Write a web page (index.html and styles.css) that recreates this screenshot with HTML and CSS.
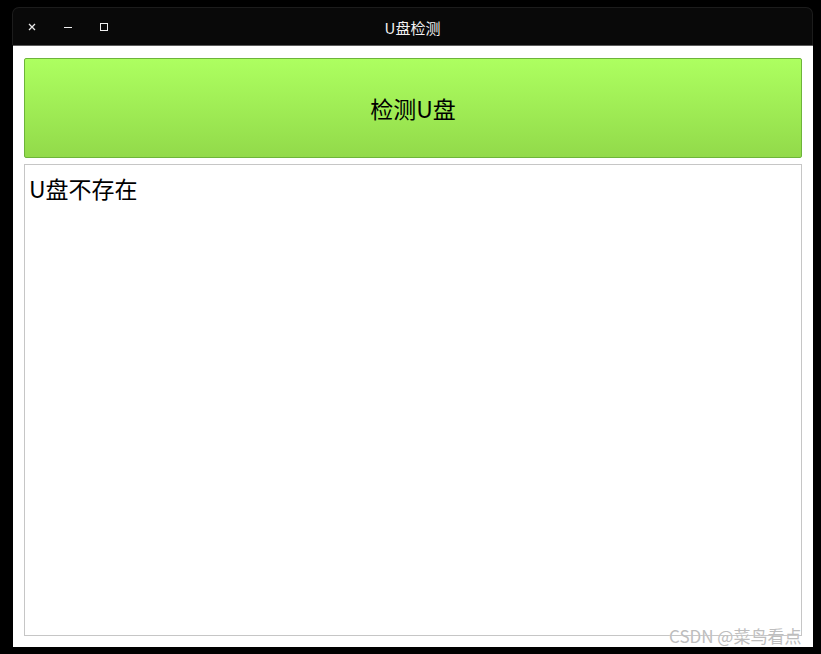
FILE: index.html
```html
<!DOCTYPE html>
<html>
<head>
<meta charset="utf-8">
<link rel="stylesheet" href="styles.css">
</head>
<body>
<div class="window">
  <div class="titlebar">
    <div class="controls">
      <span class="ctl close"><svg width="8" height="8" viewBox="0 0 8 8"><path d="M1 1L7 7M7 1L1 7" stroke="#e8e8e8" stroke-width="1.3"/></svg></span>
      <span class="ctl min"><svg width="10" height="8" viewBox="0 0 10 8"><path d="M1 4.5H9" stroke="#f0f0f0" stroke-width="1"/></svg></span>
      <span class="ctl max"><svg width="10" height="10" viewBox="0 0 10 10"><rect x="1.5" y="1.5" width="7" height="7" fill="none" stroke="#f0f0f0" stroke-width="1"/></svg></span>
    </div>
    <div class="title">U盘检测</div>
  </div>
  <div class="content">
    <button class="detect">检测U盘</button>
    <div class="output">U盘不存在</div>
  </div>
</div>
<div class="watermark">CSDN @菜鸟看点</div>
</body>
</html>
```
FILE: styles.css
```css
html, body {
  margin: 0;
  padding: 0;
  background: #000;
  width: 821px;
  height: 654px;
  overflow: hidden;
  font-family: "Noto Sans CJK SC", "Noto Sans", sans-serif;
}
.window {
  margin: 7px 0 0 12px;
  width: 801px;
  height: 640px;
  display: flex;
  flex-direction: column;
  box-sizing: border-box;
}
.titlebar {
  height: 38px;
  background: #090909;
  border: 1px solid #1c1c1c;
  border-bottom: none;
  border-radius: 7px 7px 0 0;
  box-sizing: border-box;
  position: relative;
  display: flex;
  align-items: center;
}
.controls {
  display: flex;
  align-items: center;
  padding-left: 1px;
  position: relative;
  z-index: 1;
}
.ctl {
  width: 36px;
  height: 38px;
  display: flex;
  align-items: center;
  justify-content: center;
}
.ctl svg { display: block; }
.close { margin-top: 1px; }
.title {
  position: absolute;
  left: 0;
  right: 0;
  top: 0;
  height: 38px;
  line-height: 40px;
  text-align: center;
  color: #f2f2f2;
  font-size: 15px;
}
.content {
  flex: 1;
  background: #fff;
  border-top: 1px solid #5c5c5c;
  margin-left: 1px;
  padding: 12px 11px 11px 11px;
  display: flex;
  flex-direction: column;
  gap: 6px;
  box-sizing: border-box;
}
.detect {
  height: 100px;
  border: 1px solid #6db43a;
  border-radius: 2px;
  background: linear-gradient(to bottom, #adff60, #92da4a);
  font-family: "Noto Sans CJK SC", "Noto Sans", sans-serif;
  font-size: 23px;
  color: #000;
  padding: 0;
  margin: 0;
}
.output {
  flex: 1;
  border: 1px solid #c6c6c6;
  font-size: 23px;
  line-height: 30px;
  padding: 8px 4px;
  color: #000;
}
.watermark {
  position: absolute;
  left: 669px;
  top: 623px;
  font-family: "Noto Sans CJK SC", "Noto Sans", sans-serif;
  font-size: 17px;
  color: #bdbdbd;
  text-shadow: 0 0 1px rgba(255,255,255,0.6);
}
```
